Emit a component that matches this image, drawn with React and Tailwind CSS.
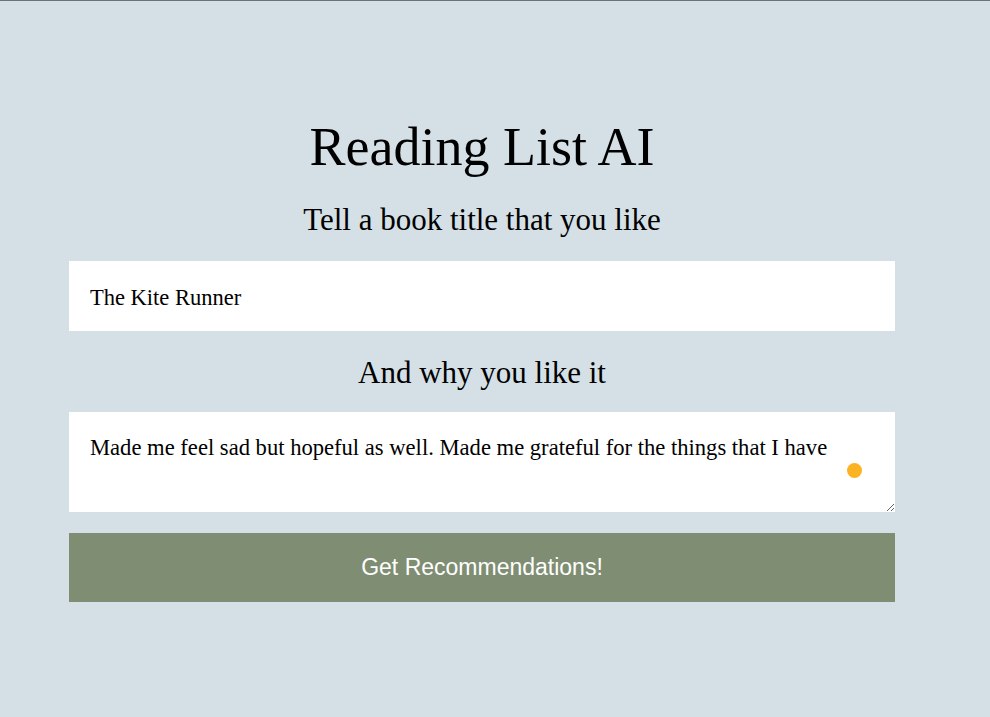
import React, { useState } from "react";

const serif = { fontFamily: '"Liberation Serif", "DejaVu Serif", serif' };

function App() {
  const [title, setTitle] = useState("The Kite Runner");
  const [reason, setReason] = useState(
    "Made me feel sad but hopeful as well. Made me grateful for the things that I have"
  );

  return (
    <div className="min-h-[717px] bg-[#d4e0e5] border-t border-[#64757f]">
      <div className="ml-[69px] w-[826px] pt-[119px] flex flex-col items-center" style={serif}>
        <h1 className="text-[54px] leading-none text-black">Reading List AI</h1>
        <h2 className="mt-[30px] text-[31px] leading-none text-black">Tell a book title that you like</h2>

        <input
          value={title}
          onChange={(e) => setTitle(e.target.value)}
          className="mt-[26px] w-full h-[70px] bg-white px-[21px] pt-[3px] text-[22.5px] text-black outline-none"
          style={serif}
        />

        <h2 className="mt-[26px] text-[31px] leading-none text-black">And why you like it</h2>

        {/* textarea with the writing-assistant dot over its corner */}
        <div className="relative mt-[24px] w-full">
          <textarea
            value={reason}
            onChange={(e) => setReason(e.target.value)}
            className="block w-full h-[100px] bg-white px-[21px] pt-[22px] text-[22.6px] leading-tight text-black outline-none resize-y"
            style={serif}
          />
          <span className="absolute left-[778px] top-[51px] w-[15px] h-[15px] rounded-full bg-[#fbb321]" />
        </div>

        <button
          className="mt-[21px] w-full h-[69px] bg-[#7f8e72] text-white text-[23px]"
          style={{ fontFamily: '"Liberation Sans", Arial, sans-serif' }}
        >
          Get Recommendations!
        </button>
      </div>
    </div>
  );
}

export default App;
